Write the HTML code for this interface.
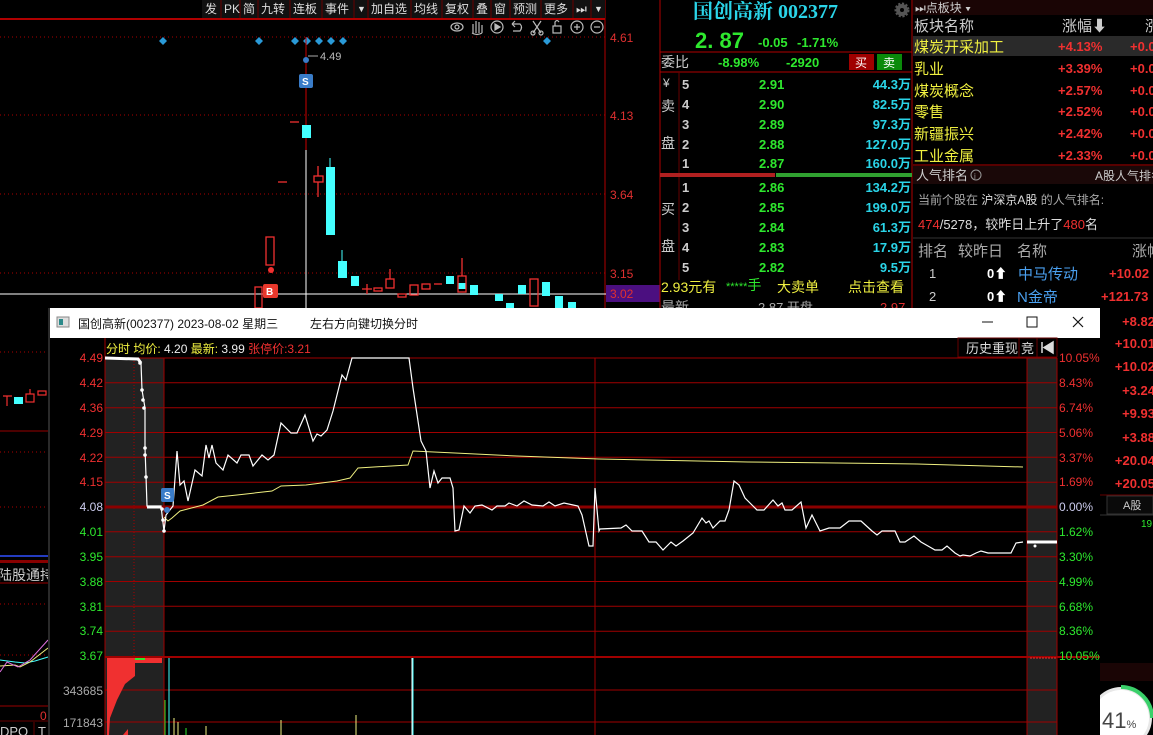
<!DOCTYPE html>
<html><head><meta charset="utf-8"><style>
html,body{margin:0;padding:0;background:#000;width:1153px;height:735px;overflow:hidden}
svg{display:block}
text{font-family:"Liberation Sans","Noto Sans CJK SC",sans-serif}
</style></head><body>
<svg width="1153" height="735" viewBox="0 0 1153 735" xmlns="http://www.w3.org/2000/svg">
<rect width="1153" height="735" fill="#000"/>

<!-- ===== TOP LEFT K-LINE ===== -->
<line x1="0" y1="19" x2="605" y2="19" stroke="#b00000" stroke-width="2"/>
<line x1="605" y1="0" x2="605" y2="310" stroke="#b00000"/>
<g font-size="12" fill="#ddd">
<rect x="202" y="0" width="403" height="18" fill="#111"/>
<g stroke="#600" stroke-width="1"><line x1="221" y1="0" x2="221" y2="18"/><line x1="240" y1="0" x2="240" y2="18"/><line x1="258" y1="0" x2="258" y2="18"/><line x1="290" y1="0" x2="290" y2="18"/><line x1="322" y1="0" x2="322" y2="18"/><line x1="354" y1="0" x2="354" y2="18"/><line x1="368" y1="0" x2="368" y2="18"/><line x1="411" y1="0" x2="411" y2="18"/><line x1="442" y1="0" x2="442" y2="18"/><line x1="473" y1="0" x2="473" y2="18"/><line x1="491" y1="0" x2="491" y2="18"/><line x1="510" y1="0" x2="510" y2="18"/><line x1="541" y1="0" x2="541" y2="18"/><line x1="573" y1="0" x2="573" y2="18"/><line x1="591" y1="0" x2="591" y2="18"/></g>
<text x="205" y="13">发</text><text x="224" y="13">PK</text><text x="243" y="13">简</text><text x="261" y="13">九转</text><text x="293" y="13">连板</text><text x="325" y="13">事件</text>
<text x="357" y="12" font-size="9">▼</text>
<text x="371" y="13">加自选</text><text x="414" y="13">均线</text><text x="445" y="13">复权</text><text x="476" y="13">叠</text><text x="494" y="13">窗</text><text x="513" y="13">预测</text><text x="544" y="13">更多</text>
<text x="576" y="13">⏭</text><text x="594" y="12" font-size="9">▼</text>
</g>
<g stroke="#bbb" fill="none" stroke-width="1.2">
<ellipse cx="457" cy="27" rx="6" ry="4"/><circle cx="457" cy="27" r="2"/>
<path d="M473,33 L473,24 M476,33 L476,21 M479,33 L479,22 M482,33 L482,25 M472,33 Q477,36 482,33"/>
<circle cx="497" cy="27" r="6"/><path d="M495,24 L500,27 L495,30 Z" fill="#bbb"/>
<path d="M512,24 L520,24 Q523,27 520,31 L513,31 M512,24 L515,21 M512,24 L515,27"/>
<path d="M533,21 L541,33 M541,21 L533,33"/><circle cx="533" cy="33" r="2"/><circle cx="541" cy="33" r="2"/>
<rect x="553" y="26" width="8" height="7"/><path d="M555,26 L555,22 Q557,19 559,22"/>
<circle cx="577" cy="27" r="6"/><path d="M574,27 L580,27 M577,24 L577,30"/>
<circle cx="597" cy="27" r="6"/><path d="M594,27 L600,27"/>
</g>
<g stroke="#a00" stroke-width="1" stroke-dasharray="1,3">
<line x1="0" y1="37" x2="605" y2="37"/><line x1="0" y1="115" x2="605" y2="115"/><line x1="0" y1="194" x2="605" y2="194"/><line x1="0" y1="273" x2="605" y2="273"/>
</g>
<line x1="0" y1="294" x2="660" y2="294" stroke="#fff"/>
<g font-size="12" fill="#e03030">
<text x="610" y="42">4.61</text><text x="610" y="120">4.13</text><text x="610" y="199">3.64</text><text x="610" y="278">3.15</text>
</g>
<rect x="606" y="285" width="54" height="17" fill="#4b0f80"/>
<text x="610" y="298" font-size="12" fill="#e03030">3.02</text>
<g fill="#2a9ad8">
<path d="M163,37 l4,4 l-4,4 l-4,-4z"/><path d="M259,37 l4,4 l-4,4 l-4,-4z"/><path d="M295,37 l4,4 l-4,4 l-4,-4z"/><path d="M307,37 l4,4 l-4,4 l-4,-4z"/><path d="M319,37 l4,4 l-4,4 l-4,-4z"/><path d="M331,37 l4,4 l-4,4 l-4,-4z"/><path d="M343,37 l4,4 l-4,4 l-4,-4z"/><path d="M547,37 l4,4 l-4,4 l-4,-4z"/>
</g>
<line x1="306" y1="37" x2="306" y2="150" stroke="#c00"/>
<line x1="306" y1="150" x2="306" y2="308" stroke="#fff"/>
<circle cx="306" cy="60" r="3" fill="#3a7cc8"/>
<line x1="308" y1="56" x2="318" y2="56" stroke="#aaa"/>
<text x="320" y="60" font-size="11" fill="#bbb">4.49</text>
<rect x="299" y="74" width="14" height="14" rx="2" fill="#3a7cc8"/>
<text x="302" y="85" font-size="10" fill="#fff" font-weight="bold">S</text>
<g fill="#4ff">
<rect x="302" y="125" width="9" height="13"/>
<rect x="326" y="167" width="9" height="68"/><line x1="330" y1="158" x2="330" y2="167" stroke="#4ff"/>
<rect x="338" y="261" width="9" height="17"/><line x1="342" y1="250" x2="342" y2="261" stroke="#4ff"/>
<rect x="351" y="276" width="8" height="10"/>
<rect x="446" y="276" width="8" height="8"/><rect x="458" y="283" width="8" height="6"/><rect x="470" y="285" width="8" height="10"/>
<rect x="495" y="294" width="8" height="7"/><rect x="506" y="303" width="8" height="5"/><rect x="518" y="285" width="8" height="9"/>
<rect x="542" y="282" width="8" height="14"/><rect x="555" y="296" width="8" height="12"/><rect x="568" y="302" width="8" height="6"/>
</g>
<g fill="none" stroke="#f03030" stroke-width="1.3">
<rect x="266" y="237" width="8" height="28"/>
<rect x="255" y="287" width="7" height="21"/>
<line x1="290" y1="122" x2="299" y2="122"/><line x1="278" y1="182" x2="287" y2="182"/>
<rect x="314" y="176" width="9" height="6"/><line x1="318" y1="166" x2="318" y2="176"/><line x1="318" y1="182" x2="318" y2="197"/>
<line x1="362" y1="289" x2="372" y2="289"/><line x1="367" y1="284" x2="367" y2="294"/>
<rect x="374" y="288" width="8" height="3"/><rect x="386" y="279" width="8" height="9"/><line x1="390" y1="269" x2="390" y2="279"/>
<rect x="398" y="294" width="8" height="3"/><rect x="410" y="285" width="8" height="10"/><rect x="422" y="284" width="8" height="5"/>
<line x1="434" y1="284" x2="442" y2="284"/>
<rect x="458" y="276" width="8" height="16"/><line x1="462" y1="258" x2="462" y2="276"/>
<rect x="530" y="279" width="8" height="27"/>
</g>
<circle cx="271" cy="270" r="3" fill="#f03030"/>
<rect x="263" y="284" width="15" height="14" rx="2" fill="#e8382c"/>
<text x="266" y="295" font-size="10" fill="#fff" font-weight="bold">B</text>

<!-- ===== QUOTE PANEL ===== -->
<line x1="660" y1="0" x2="660" y2="310" stroke="#b00000"/>
<line x1="912" y1="0" x2="912" y2="310" stroke="#b00000"/>
<text x="693" y="18" font-size="20" font-weight="bold" fill="#2ad4e8" style="font-family:'Liberation Serif','Noto Serif CJK SC',serif">国创高新 002377</text>
<circle cx="902" cy="10" r="6" fill="#555" stroke="#555" stroke-width="3" stroke-dasharray="2,1.5"/><circle cx="902" cy="10" r="2" fill="#000"/>
<text x="695" y="48" font-size="22" font-weight="bold" fill="#2ee82e">2. 87</text>
<text x="758" y="47" font-size="13" fill="#2ee82e" font-weight="bold">-0.05</text>
<text x="797" y="47" font-size="13" fill="#2ee82e" font-weight="bold">-1.71%</text>
<line x1="660" y1="52" x2="912" y2="52" stroke="#b00000"/>
<text x="661" y="67" font-size="14" fill="#ccc">委比</text>
<text x="718" y="67" font-size="13" fill="#2ee82e" font-weight="bold">-8.98%</text>
<text x="786" y="67" font-size="13" fill="#2ee82e" font-weight="bold">-2920</text>
<rect x="849" y="54" width="25" height="16" fill="#a00000"/><text x="855" y="67" font-size="12" fill="#fff">买</text>
<rect x="877" y="54" width="25" height="16" fill="#0a8a0a"/><text x="883" y="67" font-size="12" fill="#fff">卖</text>
<line x1="660" y1="72" x2="912" y2="72" stroke="#b00000"/>
<line x1="679" y1="72" x2="679" y2="280" stroke="#600"/>
<g font-size="14" fill="#ccc"><text x="663" y="87" font-size="12">¥</text><text x="661" y="111">卖</text><text x="661" y="148">盘</text><text x="661" y="214">买</text><text x="661" y="251">盘</text></g>
<g font-size="13" fill="#ccc" font-weight="bold"><text x="682" y="89">5</text><text x="682" y="109">4</text><text x="682" y="129">3</text><text x="682" y="149">2</text><text x="682" y="168">1</text>
<text x="682" y="192">1</text><text x="682" y="212">2</text><text x="682" y="232">3</text><text x="682" y="252">4</text><text x="682" y="272">5</text></g>
<g font-size="13" fill="#2ee82e" font-weight="bold"><text x="759" y="89">2.91</text><text x="759" y="109">2.90</text><text x="759" y="129">2.89</text><text x="759" y="149">2.88</text><text x="759" y="168">2.87</text>
<text x="759" y="192">2.86</text><text x="759" y="212">2.85</text><text x="759" y="232">2.84</text><text x="759" y="252">2.83</text><text x="759" y="272">2.82</text></g>
<g font-size="13" fill="#2ad4e8" font-weight="bold" text-anchor="end"><text x="911" y="89">44.3万</text><text x="911" y="109">82.5万</text><text x="911" y="129">97.3万</text><text x="911" y="149">127.0万</text><text x="911" y="168">160.0万</text>
<text x="911" y="192">134.2万</text><text x="911" y="212">199.0万</text><text x="911" y="232">61.3万</text><text x="911" y="252">17.9万</text><text x="911" y="272">9.5万</text></g>
<rect x="660" y="173" width="115" height="4" fill="#b02020"/><rect x="776" y="173" width="136" height="4" fill="#30a030"/>
<text x="661" y="292" font-size="14" fill="#f0f040">2.93元有</text>
<text x="726" y="290" font-size="11" fill="#2ee82e">*****<tspan font-size="14">手</tspan></text>
<text x="777" y="292" font-size="14" fill="#f0f040">大卖单</text>
<text x="848" y="292" font-size="14" fill="#f0f040">点击查看</text>
<text x="661" y="312" font-size="14" fill="#aaa">最新</text>
<text x="758" y="312" font-size="13" fill="#aaa">2.87 开盘</text><text x="880" y="312" font-size="13" fill="#e03030">2.97</text>

<!-- ===== SECTOR PANEL ===== -->
<rect x="913" y="0" width="240" height="15" fill="#1a0505"/>
<text x="915" y="12" font-size="12" fill="#ccc">⏭点板块 ▾</text>
<text x="914" y="31" font-size="15" fill="#ccc">板块名称</text>
<text x="1062" y="31" font-size="15" fill="#ccc">涨幅⬇</text><text x="1145" y="31" font-size="15" fill="#ccc">涨</text>
<rect x="913" y="36" width="240" height="20" fill="#2a2a2a"/>
<g font-size="15" fill="#f0f040"><text x="914" y="52">煤炭开采加工</text><text x="914" y="74">乳业</text><text x="914" y="96">煤炭概念</text><text x="914" y="117">零售</text><text x="914" y="139">新疆振兴</text><text x="914" y="161">工业金属</text></g>
<g font-size="13" fill="#f03030" font-weight="bold"><text x="1058" y="51">+4.13%</text><text x="1058" y="73">+3.39%</text><text x="1058" y="95">+2.57%</text><text x="1058" y="116">+2.52%</text><text x="1058" y="138">+2.42%</text><text x="1058" y="160">+2.33%</text>
<text x="1130" y="51">+0.0</text><text x="1130" y="73">+0.0</text><text x="1130" y="95">+0.0</text><text x="1130" y="116">+0.0</text><text x="1130" y="138">+0.0</text><text x="1130" y="160">+0.0</text></g>
<line x1="913" y1="165" x2="1153" y2="165" stroke="#b00000"/>
<rect x="913" y="166" width="240" height="18" fill="#1a0808"/>
<text x="916" y="180" font-size="13" fill="#ccc">人气排名</text><circle cx="976" cy="175" r="5" fill="none" stroke="#999"/><text x="974" y="179" font-size="8" fill="#999">i</text>
<text x="1095" y="180" font-size="12" fill="#ccc">A股人气排名</text>
<text x="918" y="204" font-size="12" fill="#aaa">当前个股在 <tspan fill="#ddd">沪深京A股</tspan> 的人气排名:</text>
<text x="918" y="229" font-size="13" fill="#ddd"><tspan fill="#f03030">474</tspan>/5278，较昨日上升了<tspan fill="#f03030">480</tspan>名</text>
<line x1="913" y1="238" x2="1153" y2="238" stroke="#333"/>
<text x="918" y="256" font-size="15" fill="#aaa">排名</text><text x="958" y="256" font-size="15" fill="#aaa">较昨日</text><text x="1017" y="256" font-size="15" fill="#aaa">名称</text><text x="1132" y="256" font-size="15" fill="#aaa">涨幅</text>
<text x="929" y="278" font-size="13" fill="#ccc">1</text><text x="987" y="278" font-size="13" fill="#fff" font-weight="bold">0⬆</text><text x="1018" y="279" font-size="15" fill="#4aa0f0">中马传动</text><text x="1109" y="278" font-size="13" fill="#f03030" font-weight="bold">+10.02</text>
<text x="929" y="301" font-size="13" fill="#ccc">2</text><text x="987" y="301" font-size="13" fill="#fff" font-weight="bold">0⬆</text><text x="1017" y="302" font-size="15" fill="#4aa0f0">N金帝</text><text x="1101" y="301" font-size="13" fill="#f03030" font-weight="bold">+121.73</text>
<g font-size="13" fill="#f03030" font-weight="bold" text-anchor="end">
<text x="1155" y="326">+8.82</text><text x="1155" y="348">+10.01</text><text x="1155" y="371">+10.02</text><text x="1155" y="395">+3.24</text><text x="1155" y="418">+9.93</text><text x="1155" y="442">+3.88</text><text x="1155" y="465">+20.04</text><text x="1155" y="488">+20.05</text>
</g>
<line x1="1100" y1="495" x2="1153" y2="495" stroke="#600"/>
<rect x="1107" y="496" width="46" height="18" fill="#0a0a0a" stroke="#333"/>
<text x="1123" y="509" font-size="11" fill="#ccc">A股</text>
<line x1="1100" y1="515" x2="1153" y2="515" stroke="#333"/>
<text x="1141" y="527" font-size="10" fill="#2ee82e">19</text>
<rect x="1100" y="663" width="53" height="18" fill="#1a0505"/>
<circle cx="1121" cy="718" r="31" fill="#e8e8e8"/>
<circle cx="1121" cy="718" r="28" fill="#fff"/>
<path d="M1121,687 A31,31 0 0 1 1152,718" fill="none" stroke="#3ad06a" stroke-width="4"/>
<text x="1102" y="728" font-size="22" fill="#444">41<tspan font-size="11">%</tspan></text>

<!-- ===== LEFT STRIP ===== -->
<g stroke="#a00" stroke-dasharray="1,3"><line x1="0" y1="352" x2="48" y2="352"/><line x1="0" y1="452" x2="48" y2="452"/><line x1="0" y1="507" x2="48" y2="507"/><line x1="0" y1="604" x2="48" y2="604"/><line x1="0" y1="655" x2="48" y2="655"/></g>
<g stroke="#f03030" fill="none" stroke-width="1.2"><path d="M3,396 L12,396 M7,396 L7,406"/><rect x="26" y="394" width="8" height="8"/><line x1="30" y1="389" x2="30" y2="394"/><rect x="38" y="391" width="8" height="4"/></g>
<rect x="14" y="397" width="9" height="7" fill="#4ff"/>
<line x1="0" y1="431" x2="48" y2="431" stroke="#900"/>
<line x1="0" y1="556" x2="48" y2="556" stroke="#3050ff" stroke-width="1.5"/>
<rect x="0" y="560" width="48" height="3" fill="#800"/>
<text x="-2" y="580" font-size="14" fill="#ccc">陆股通持股</text>
<line x1="0" y1="583" x2="48" y2="583" stroke="#900"/>
<polyline points="0,660 15,662 25,663 35,661 48,657" fill="none" stroke="#4ff"/>
<polyline points="0,666 15,665 20,667 30,662 48,648" fill="none" stroke="#f0f080"/>
<polyline points="0,672 7,662 18,667 30,660 48,640" fill="none" stroke="#e070e0"/>
<line x1="0" y1="706" x2="48" y2="706" stroke="#900"/>
<text x="40" y="720" font-size="12" fill="#e03030">0</text>
<line x1="0" y1="721" x2="48" y2="721" stroke="#600"/>
<text x="0" y="736" font-size="13" fill="#ccc">DPO</text><line x1="34" y1="722" x2="34" y2="735" stroke="#600"/><text x="38" y="736" font-size="13" fill="#ccc">T</text>

<!-- ===== POPUP WINDOW ===== -->
<rect x="48" y="308" width="2" height="427" fill="#2a2a2a"/>
<rect x="50" y="308" width="1050" height="30" fill="#fff"/>
<rect x="57" y="317" width="12" height="10" fill="#ddd" stroke="#888"/><rect x="59" y="319" width="4" height="6" fill="#2a8a8a"/>
<text x="78" y="328" font-size="12" fill="#111">国创高新(002377) 2023-08-02 星期三</text>
<text x="310" y="328" font-size="12" fill="#111">左右方向键切换分时</text>
<line x1="982" y1="322" x2="993" y2="322" stroke="#111"/>
<rect x="1027" y="317" width="10" height="10" fill="none" stroke="#111"/>
<path d="M1073,317 L1083,327 M1083,317 L1073,327" stroke="#111" stroke-width="1.2"/>
<rect x="50" y="338" width="1050" height="397" fill="#000"/>
<rect x="105" y="358" width="59" height="377" fill="#222"/>
<rect x="1027" y="358" width="30" height="377" fill="#222"/>
<line x1="134" y1="358" x2="134" y2="657" stroke="#a00" stroke-dasharray="1,2"/>
<g stroke="#a00000" stroke-width="1">
<line x1="105" y1="358" x2="1057" y2="358"/><line x1="105" y1="382.8" x2="1057" y2="382.8"/><line x1="105" y1="407.7" x2="1057" y2="407.7"/><line x1="105" y1="432.5" x2="1057" y2="432.5"/><line x1="105" y1="457.3" x2="1057" y2="457.3"/><line x1="105" y1="482.2" x2="1057" y2="482.2"/>
<line x1="105" y1="531.8" x2="1057" y2="531.8"/><line x1="105" y1="556.7" x2="1057" y2="556.7"/><line x1="105" y1="581.5" x2="1057" y2="581.5"/><line x1="105" y1="606.3" x2="1057" y2="606.3"/><line x1="105" y1="631.2" x2="1057" y2="631.2"/>
<line x1="105" y1="690" x2="1057" y2="690"/><line x1="105" y1="722" x2="1057" y2="722"/>
<line x1="105" y1="338" x2="105" y2="735"/><line x1="164" y1="358" x2="164" y2="735"/><line x1="595" y1="358" x2="595" y2="735"/><line x1="1027" y1="358" x2="1027" y2="735"/><line x1="1057" y1="358" x2="1057" y2="735"/>
</g>
<line x1="105" y1="507" x2="1057" y2="507" stroke="#8b0000" stroke-width="3"/>
<line x1="105" y1="657" x2="1100" y2="657" stroke="#a00000" stroke-width="2"/>
<text x="106" y="353" font-size="12" fill="#f0f040">分时 均价: <tspan fill="#eee">4.20</tspan> 最新: <tspan fill="#eee">3.99</tspan> <tspan fill="#f03030">张停价:3.21</tspan></text>
<rect x="958" y="338" width="99" height="19" fill="#000" stroke="#600"/>
<line x1="1019" y1="338" x2="1019" y2="357" stroke="#600"/><line x1="1037" y1="338" x2="1037" y2="357" stroke="#600"/>
<text x="966" y="353" font-size="13" fill="#ddd">历史重现</text><text x="1021" y="353" font-size="13" fill="#ddd">竞</text>
<path d="M1042,342 L1042,353 M1053,342 L1044,347.5 L1053,353 Z" stroke="#ddd" fill="#ddd" stroke-width="1.5"/>
<g font-size="12" text-anchor="end">
<g fill="#f03030"><text x="103" y="362">4.49</text><text x="103" y="387">4.42</text><text x="103" y="412">4.36</text><text x="103" y="437">4.29</text><text x="103" y="462">4.22</text><text x="103" y="486">4.15</text></g>
<text x="103" y="511" fill="#cce">4.08</text>
<g fill="#2ee82e"><text x="103" y="536">4.01</text><text x="103" y="561">3.95</text><text x="103" y="586">3.88</text><text x="103" y="611">3.81</text><text x="103" y="635">3.74</text><text x="103" y="660">3.67</text></g>
<g fill="#aaa"><text x="103" y="695">343685</text><text x="103" y="727">171843</text></g>
</g>
<g font-size="12">
<g fill="#f03030"><text x="1059" y="362">10.05%</text><text x="1059" y="387">8.43%</text><text x="1059" y="412">6.74%</text><text x="1059" y="437">5.06%</text><text x="1059" y="462">3.37%</text><text x="1059" y="486">1.69%</text></g>
<text x="1059" y="511" fill="#cce">0.00%</text>
<g fill="#2ee82e"><text x="1059" y="536">1.62%</text><text x="1059" y="561">3.30%</text><text x="1059" y="586">4.99%</text><text x="1059" y="611">6.68%</text><text x="1059" y="635">8.36%</text><text x="1059" y="660">10.05%</text></g>
</g>
<path d="M107,658 L135,658 L135,676 L125,684 L117,700 L110,718 L109,735 L107,735 Z" fill="#f03030"/>
<rect x="135" y="658" width="27" height="5" fill="#f03030"/><rect x="135" y="658" width="10" height="2" fill="#2ee82e"/>
<path d="M123,735 L128,729 L128,735 Z" fill="#f03030"/>
<line x1="169" y1="658" x2="169" y2="735" stroke="#4ff"/>
<line x1="412" y1="658" x2="412" y2="735" stroke="#fff"/>
<line x1="413" y1="658" x2="413" y2="735" stroke="#4ff"/>
<g stroke="#f0f080"><line x1="174" y1="718" x2="174" y2="735"/><line x1="178" y1="722" x2="178" y2="735"/><line x1="281" y1="720" x2="281" y2="735"/><line x1="356" y1="715" x2="356" y2="735"/><line x1="206" y1="726" x2="206" y2="735"/></g>
<g stroke="#2ee82e"><line x1="165" y1="700" x2="165" y2="735"/><line x1="186" y1="728" x2="186" y2="735"/></g>
<line x1="1030" y1="658" x2="1057" y2="658" stroke="#f03030" stroke-dasharray="2,1"/>
<polyline fill="none" stroke="#f0f080" stroke-width="1" points="164,517 168,521 172,518 180,511 203,505 218,497 237,495 272,491 281,486 306,485 337,481 350,478 358,468 408,465 413,451 455,453 517,456 599,459 748,462 917,464 1023,467"/>
<polyline fill="none" stroke="#fff" stroke-width="3" points="105,358 138,359 141,363"/>
<polyline fill="none" stroke="#fff" stroke-width="3" points="147,507 161,507"/>
<polyline fill="none" stroke="#fff" stroke-width="1.2" points="105,358 138,359 141,363 142,390 145,408 145,448 146,476 147,506 161,506 164,531 166,515 173,506 177,451 180,485 184,481 188,501 195,470 202,476 206,445 209,458 212,445 216,463 223,470 228,455 237,463 241,455 249,455 253,466 262,455 268,460 274,455 281,423 291,433 297,433 305,415 313,441 317,434 321,436 327,430 333,411 342,375 346,380 352,358 409,358 413,388 421,441 426,451 430,488 434,471 438,483 442,478 450,478 453,488 455,531 459,530 464,506 470,513 475,506 482,505 492,510 497,506 505,506 509,503 517,506 524,501 532,505 543,506 549,502 555,506 564,503 578,506 582,515 589,546 593,546 595,488 599,531 600,529 621,528 626,525 632,531 642,531 649,542 656,542 663,550 671,542 676,546 683,541 693,533 702,518 706,523 709,521 713,528 720,521 725,521 729,510 734,481 739,485 745,498 752,505 757,510 764,510 773,500 778,506 782,503 785,510 792,510 801,502 806,528 812,515 820,531 829,528 840,528 849,521 861,521 872,531 877,535 882,531 895,531 900,542 905,542 914,536 921,542 928,546 935,550 942,550 947,546 955,553 960,556 963,555 970,556 976,553 981,551 988,553 1011,553 1016,543 1023,542"/>
<line x1="1027" y1="542" x2="1057" y2="542" stroke="#fff" stroke-width="3"/>
<circle cx="1035" cy="546" r="1.5" fill="#fff"/>
<g fill="#fff"><circle cx="140" cy="363" r="1.8"/><circle cx="142" cy="390" r="1.8"/><circle cx="143" cy="400" r="1.8"/><circle cx="144" cy="408" r="1.8"/><circle cx="145" cy="448" r="1.8"/><circle cx="145" cy="455" r="1.8"/><circle cx="146" cy="477" r="1.8"/><circle cx="162" cy="509" r="1.8"/><circle cx="163" cy="520" r="1.8"/><circle cx="164" cy="531" r="1.8"/></g>
<rect x="161" y="488" width="13" height="14" rx="2" fill="#3a7cc8"/>
<text x="164" y="499" font-size="10" fill="#fff" font-weight="bold">S</text>
<circle cx="167" cy="510" r="3" fill="#3a7cc8"/>
</svg>
</body></html>
